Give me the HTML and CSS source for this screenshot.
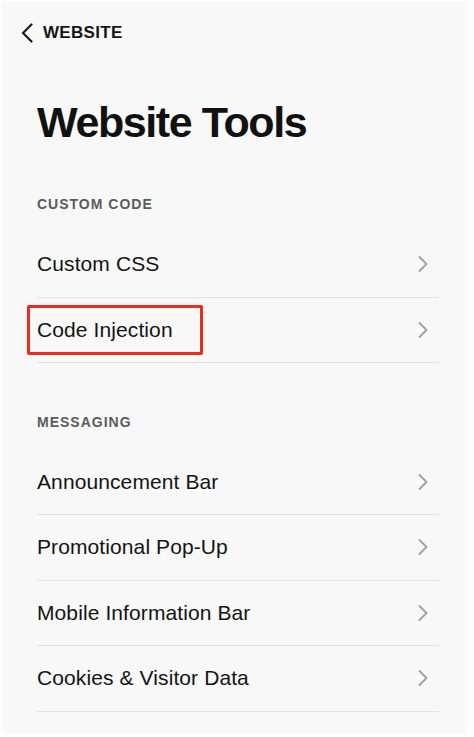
FILE: index.html
```html
<!DOCTYPE html>
<html>
<head>
<meta charset="utf-8">
<link rel="stylesheet" href="styles.css">
</head>
<body>
<div class="panel">
  <div class="back">
    <svg class="back-icon" width="14" height="20" viewBox="0 0 14 20"><path d="M11.5 1.5 L3 10 L11.5 18.5" fill="none" stroke="#1a1a1a" stroke-width="2.2" stroke-linecap="round" stroke-linejoin="round"/></svg>
    <span class="back-label">WEBSITE</span>
  </div>
  <h1 class="title">Website Tools</h1>

  <div class="section section-first">
    <div class="section-head">CUSTOM CODE</div>
    <ul class="list">
      <li class="row"><span class="row-label">Custom CSS</span><svg class="chev" width="12" height="18" viewBox="0 0 12 18"><path d="M2.5 2 L9.5 9 L2.5 16" fill="none" stroke="#a3a3a3" stroke-width="2" stroke-linecap="round" stroke-linejoin="round"/></svg></li>
      <li class="row row-marked"><span class="row-label">Code Injection</span><span class="mark"></span><svg class="chev" width="12" height="18" viewBox="0 0 12 18"><path d="M2.5 2 L9.5 9 L2.5 16" fill="none" stroke="#a3a3a3" stroke-width="2" stroke-linecap="round" stroke-linejoin="round"/></svg></li>
    </ul>
  </div>

  <div class="section section-second">
    <div class="section-head">MESSAGING</div>
    <ul class="list">
      <li class="row"><span class="row-label">Announcement Bar</span><svg class="chev" width="12" height="18" viewBox="0 0 12 18"><path d="M2.5 2 L9.5 9 L2.5 16" fill="none" stroke="#a3a3a3" stroke-width="2" stroke-linecap="round" stroke-linejoin="round"/></svg></li>
      <li class="row"><span class="row-label">Promotional Pop-Up</span><svg class="chev" width="12" height="18" viewBox="0 0 12 18"><path d="M2.5 2 L9.5 9 L2.5 16" fill="none" stroke="#a3a3a3" stroke-width="2" stroke-linecap="round" stroke-linejoin="round"/></svg></li>
      <li class="row"><span class="row-label">Mobile Information Bar</span><svg class="chev" width="12" height="18" viewBox="0 0 12 18"><path d="M2.5 2 L9.5 9 L2.5 16" fill="none" stroke="#a3a3a3" stroke-width="2" stroke-linecap="round" stroke-linejoin="round"/></svg></li>
      <li class="row"><span class="row-label">Cookies &amp; Visitor Data</span><svg class="chev" width="12" height="18" viewBox="0 0 12 18"><path d="M2.5 2 L9.5 9 L2.5 16" fill="none" stroke="#a3a3a3" stroke-width="2" stroke-linecap="round" stroke-linejoin="round"/></svg></li>
    </ul>
  </div>
</div>
</body>
</html>
```

FILE: styles.css
```css
html, body {
  margin: 0;
  padding: 0;
  background: #fdfdfd;
}

body {
  font-family: "Liberation Sans", Arial, sans-serif;
  color: #111;
}

.panel {
  margin: 2px 8px 0 2px;
  height: 731px;
  box-sizing: border-box;
  background: #f8f8f8;
  padding: 16px 0 0 35px;
  overflow: hidden;
}

.back {
  display: flex;
  align-items: center;
  height: 30px;
  margin-left: -17px;
  gap: 9px;
}

.back-icon {
  display: block;
}

.back-label {
  font-size: 17px;
  font-weight: 700;
  letter-spacing: 0.3px;
  line-height: 30px;
  color: #151515;
}

.title {
  margin: 49px 0 0 0;
  font-size: 43px;
  line-height: 50px;
  font-weight: 700;
  letter-spacing: -1.4px;
  color: #111;
}

.section-first {
  margin-top: 47px;
}

.section-second {
  margin-top: 48.5px;
}

.section-head {
  font-size: 14px;
  line-height: 20px;
  font-weight: 700;
  letter-spacing: 1px;
  color: #5b5b5b;
}

.list {
  list-style: none;
  margin: 18px 0 0 0;
  padding: 0;
  width: 402px;
}

.row {
  position: relative;
  display: flex;
  align-items: center;
  justify-content: space-between;
  height: 64.5px;
  border-bottom: 1px solid #e3e3e3;
}

.row-label {
  font-size: 21px;
  letter-spacing: 0.1px;
  color: #141414;
}

.chev {
  display: block;
  margin-right: 10px;
}

.mark {
  position: absolute;
  left: -10px;
  top: 7.5px;
  width: 176px;
  height: 50px;
  box-sizing: border-box;
  border: 3.5px solid #ee2b1b;
  border-radius: 2px;
}
```
